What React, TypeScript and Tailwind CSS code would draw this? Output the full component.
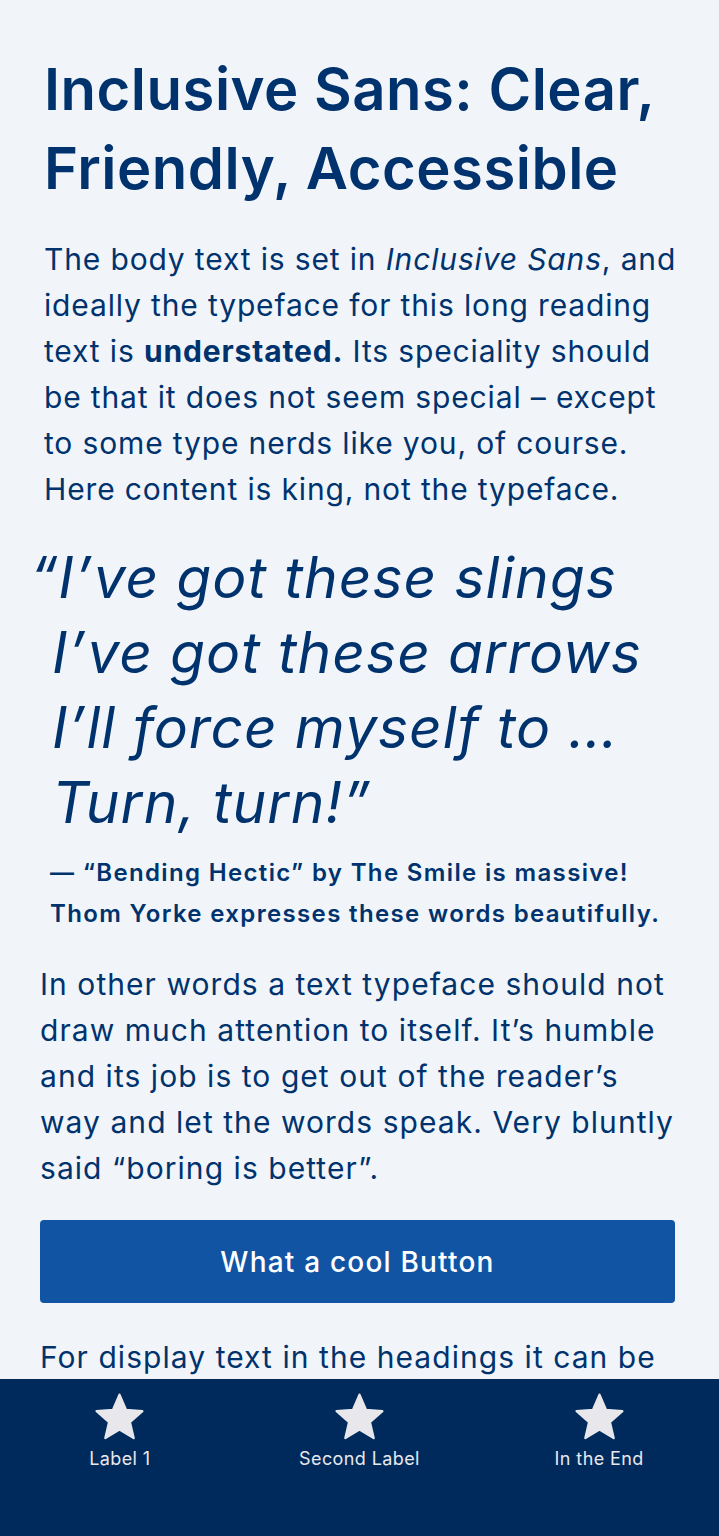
import { useState } from "react";

const NAV_ITEMS = ["Label 1", "Second Label", "In the End"];

function StarIcon() {
    return (
        <svg viewBox="0 0 24 24" className="w-[55px] h-[55px]" fill="#e8e8ec" stroke="#e8e8ec" strokeWidth={1} strokeLinejoin="round">
            <path d="M12 17.27L18.18 21l-1.64-7.03L22 9.24l-7.19-.61L12 2 9.19 8.63 2 9.24l5.46 4.73L5.82 21z" />
        </svg>
    );
}

export default function App() {
    const [active, setActive] = useState(0);

    return (
        <div className="min-h-screen bg-[#f1f5f9] text-[#00336e] font-['Inter','Liberation_Sans',sans-serif]">
            <main className="pt-[50px] pb-[160px]">
                <h1 className="pl-[44px] pr-[16px] text-[58px] leading-[79px] font-semibold tracking-[0.5px]">
                    Inclusive Sans: Clear,<br />
                    Friendly, Accessible
                </h1>

                <p className="mt-[28px] pl-[44px] pr-[10px] text-[30px] leading-[46px] tracking-[0.85px]">
                    The body text is set in <em>Inclusive Sans</em>, and<br />
                    ideally the typeface for this long reading<br />
                    text is <strong>understated.</strong> Its speciality should<br />
                    be that it does not seem special – except<br />
                    to some type nerds like you, of course.<br />
                    Here content is king, not the typeface.
                </p>

                {/* Quote */}
                <figure className="mt-[28px] pl-[52px] pr-[10px]">
                    <blockquote className="italic text-[57px] leading-[75px] -indent-[22px] tracking-[1px]">
                        “I’ve got these slings<br />
                        I’ve got these arrows<br />
                        I’ll force myself to …<br />
                        Turn, turn!”
                    </blockquote>
                    <figcaption className="mt-[12px] -ml-[2px] text-[24px] leading-[41px] font-semibold tracking-[1.35px]">
                        — “Bending Hectic” by The Smile is massive!<br />
                        Thom Yorke expresses these words beautifully.
                    </figcaption>
                </figure>

                <p className="mt-[27px] pl-[40px] pr-[10px] text-[30px] leading-[46px] tracking-[1.05px]">
                    In other words a text typeface should not<br />
                    draw much attention to itself. It’s humble<br />
                    and its job is to get out of the reader’s<br />
                    way and let the words speak. Very bluntly<br />
                    said “boring is better”.
                </p>

                <div className="pl-[40px] pr-[44px] mt-[29px]">
                    <button className="w-full h-[83px] rounded-[4px] bg-[#1254a4] text-white text-[28px] font-medium tracking-[1.2px]">
                        What a cool Button
                    </button>
                </div>

                <p className="mt-[31px] pl-[40px] pr-[10px] text-[30px] leading-[46px] tracking-[1.05px]">
                    For display text in the headings it can be
                </p>
            </main>

            <nav className="fixed bottom-0 left-0 right-0 h-[157px] bg-[#002a5c] grid grid-cols-3 pt-[11px]">
                {NAV_ITEMS.map((label, i) => (
                    <button key={label} onClick={() => setActive(i)} className="flex flex-col items-center text-[18px] leading-[24px] text-[#e8e8ec]" aria-current={active === i}>
                        <StarIcon />
                        <span className="mt-[2px] tracking-[0.4px]">{label}</span>
                    </button>
                ))}
            </nav>
        </div>
    );
}
